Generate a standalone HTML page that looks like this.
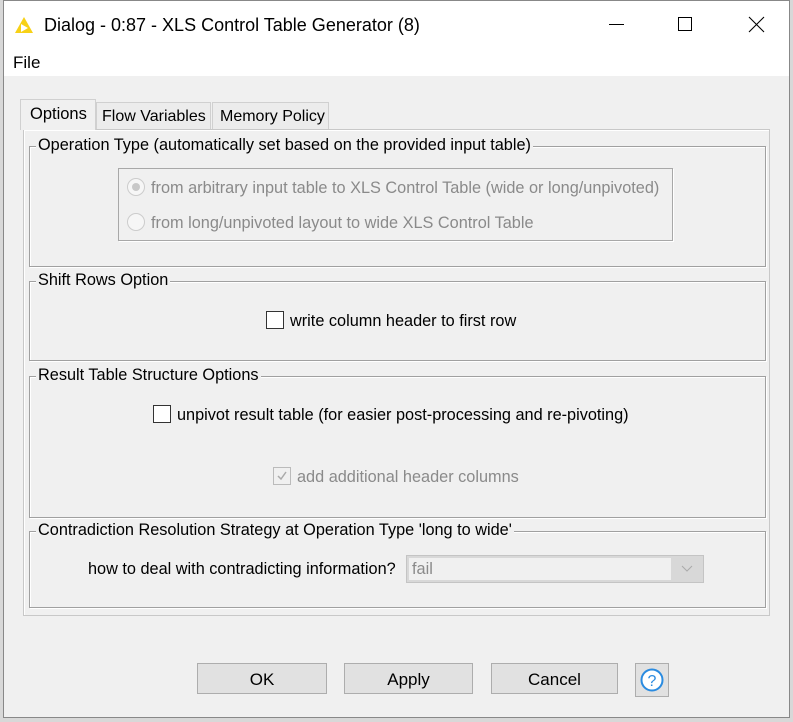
<!DOCTYPE html>
<html><head><style>
body{margin:0;width:793px;height:722px;background:#d8d8d8;position:relative;overflow:hidden;font-family:"Liberation Sans",sans-serif;font-size:16.3px;color:#000}
.a{position:absolute}
.win{left:3px;top:0;width:787px;height:718px;background:#f0f0f0;border:1px solid #888;box-sizing:border-box}
.grp{position:absolute;left:29px;width:735px;border:1px solid #a0a0a0;box-shadow:inset 1px 1px 0 #fff,1px 1px 0 #fff}
.lg{position:absolute;top:-11px;left:6px;background:#f0f0f0;padding:0 2px;white-space:nowrap}
.btn{position:absolute;top:663px;height:31px;background:#e1e1e1;border:1px solid #adadad;box-sizing:border-box;text-align:center;line-height:31px;font-size:17px}
.cb{display:inline-block;width:18px;height:18px;border:1px solid #333;background:#fff;box-sizing:border-box;vertical-align:-3px;margin-right:6px}
.rad{display:inline-block;width:18px;height:18px;border-radius:50%;border:1px solid #ccc;background:#f6f6f6;box-sizing:border-box;vertical-align:-3px;margin-right:6px;position:relative}
.g{color:#8a8a8a}
</style></head><body>
<div class="a win"></div>
<div class="a" style="left:4px;top:1px;width:785px;height:75px;background:#fff"></div>
<svg class="a" style="left:14px;top:16px" width="20" height="18"><polygon points="1,17 10,1 19,17" fill="#f7d117"/><polygon points="7,8 7,16 14,12" fill="#fff"/></svg>
<div class="a" style="left:44px;top:15px;font-size:18px">Dialog - 0:87 - XLS Control Table Generator (8)</div>
<div class="a" style="left:609px;top:24px;width:15px;height:1px;background:#000"></div>
<div class="a" style="left:678px;top:17px;width:14px;height:14px;border:1px solid #000;box-sizing:border-box"></div>
<svg class="a" style="left:748px;top:16px" width="17" height="17"><path d="M1 1L16 16M16 1L1 16" stroke="#000" stroke-width="1.1"/></svg>
<div class="a" style="left:13px;top:53px;font-size:17px">File</div>
<div class="a" style="left:23px;top:129px;width:747px;height:487px;border:1px solid #c8c8c8;box-sizing:border-box;box-shadow:inset 1px 1px 0 #fff"></div>
<div class="a" style="left:96px;top:102px;width:115px;height:27px;border:1px solid #d0d0d0;border-bottom:none;box-sizing:border-box;background:#ececec"></div>
<div class="a" style="left:212px;top:102px;width:117px;height:27px;border:1px solid #d0d0d0;border-bottom:none;box-sizing:border-box;background:#ececec"></div>
<div class="a" style="left:20px;top:99px;width:76px;height:31px;border:1px solid #d0d0d0;border-bottom:none;box-sizing:border-box;background:#f0f0f0"></div>
<div class="a" style="left:30px;top:105px;font-size:16.5px">Options</div>
<div class="a" style="left:102px;top:108px;font-size:16px">Flow Variables</div>
<div class="a" style="left:220px;top:108px;font-size:16px">Memory Policy</div>

<div class="grp" style="top:146px;height:119px"><div class="lg">Operation Type (automatically set based on the provided input table)</div>
<div class="a" style="left:88px;top:21px;width:553px;height:71px;border:1px solid #a8a8a8;box-shadow:1px 1px 0 #fff"></div>
<div class="a g" style="left:97px;top:31px"><span class="rad"><span class="a" style="left:4px;top:4px;width:8px;height:8px;border-radius:50%;background:#c8c8c8"></span></span>from arbitrary input table to XLS Control Table (wide or long/unpivoted)</div>
<div class="a g" style="left:97px;top:66px"><span class="rad"></span>from long/unpivoted layout to wide XLS Control Table</div>
</div>
<div class="grp" style="top:281px;height:78px"><div class="lg">Shift Rows Option</div>
<div class="a" style="left:236px;top:29px"><span class="cb"></span>write column header to first row</div></div>
<div class="grp" style="top:376px;height:140px"><div class="lg">Result Table Structure Options</div>
<div class="a" style="left:123px;top:28px"><span class="cb"></span>unpivot result table (for easier post-processing and re-pivoting)</div>
<div class="a g" style="left:243px;top:90px"><span class="cb" style="border-color:#bbb;background:#f0f0f0;position:relative"><svg class="a" style="left:2px;top:2px" width="12" height="12"><path d="M2 6L5 9L10 2" stroke="#aaa" stroke-width="1.5" fill="none"/></svg></span>add additional header columns</div></div>
<div class="grp" style="top:531px;height:75px"><div class="lg">Contradiction Resolution Strategy at Operation Type 'long to wide'</div>
<div class="a" style="left:58px;top:28px">how to deal with contradicting information?</div>
<div class="a" style="left:376px;top:23px;width:298px;height:28px;background:#d8d8d8;border:1px solid #c4c4c4;box-sizing:border-box"><div class="a" style="left:2px;top:2px;width:262px;height:22px;background:#f0f0f0"></div><div class="a g" style="left:5px;top:4px">fail</div><svg class="a" style="left:274px;top:9px" width="12" height="8"><path d="M1 1L6 6L11 1" stroke="#aaa" fill="none"/></svg></div></div>

<div class="btn" style="left:197px;width:130px">OK</div>
<div class="btn" style="left:344px;width:129px">Apply</div>
<div class="btn" style="left:491px;width:127px">Cancel</div>
<div class="btn" style="left:635px;width:34px;height:34px"><svg style="margin-top:4px" width="24" height="24"><circle cx="12" cy="12" r="10.5" fill="#fff" stroke="#2a8be0" stroke-width="2"/><text x="12" y="18" text-anchor="middle" font-family="Liberation Sans" font-size="16" fill="#2a8be0">?</text></svg></div>
</body></html>
